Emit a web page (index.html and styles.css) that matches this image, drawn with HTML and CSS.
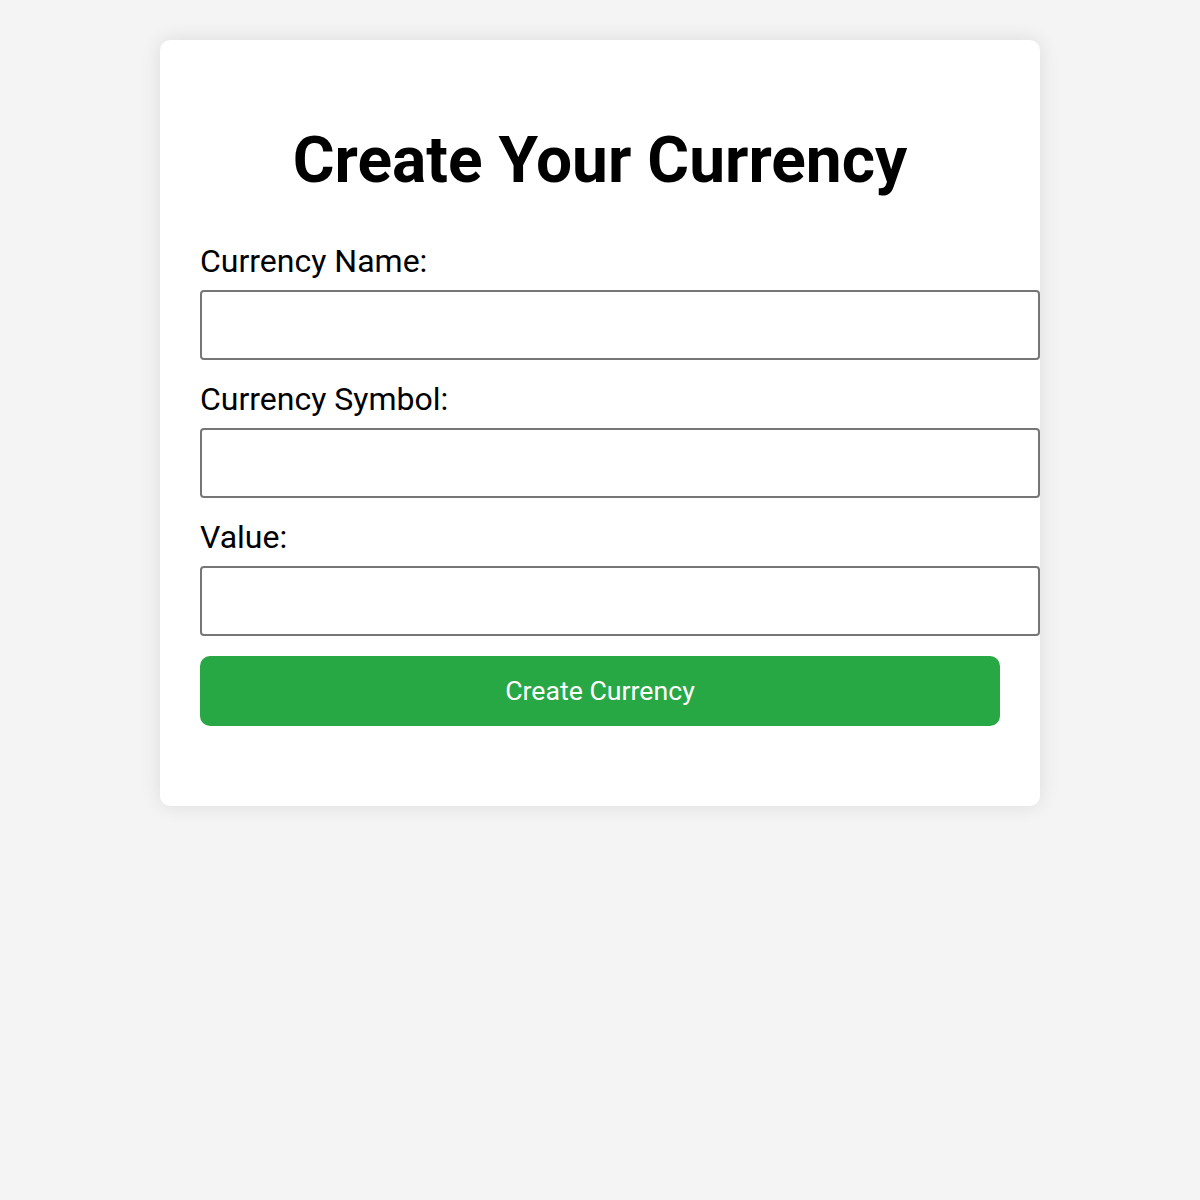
FILE: index.html
```html
<!DOCTYPE html>
<html lang="en">
<head>
  <meta charset="UTF-8">
  <meta name="viewport" content="width=device-width, initial-scale=1.0">
  <title>Create Your Currency</title>
  <link rel="stylesheet" href="styles.css">
</head>
<body>
  <div class="container">
    <h1>Create Your Currency</h1>
    <form id="currencyForm">
      <label for="currencyName">Currency Name:</label>
      <input type="text" id="currencyName">

      <label for="currencySymbol">Currency Symbol:</label>
      <input type="text" id="currencySymbol">

      <label for="currencyValue">Value:</label>
      <input type="text" id="currencyValue">

      <button type="submit">Create Currency</button>
    </form>
  </div>
</body>
</html>
```

FILE: styles.css
```css
body {
  font-family: Roboto, "Liberation Sans", Arial, sans-serif;
  font-size: 32px;
  background-color: #f4f4f4;
  margin: 0;
  padding: 40px 0;
}
.container {
  width: 800px;
  margin: 0 auto;
  padding: 40px;
  background-color: #fff;
  border-radius: 10px;
  box-shadow: 0 0 20px rgba(0,0,0,0.1);
}
h1 {
  text-align: center;
  font-size: 64px;
  margin: 43px 0 44px;
  color: #000;
}
form {
  margin-bottom: 40px;
}
label {
  display: block;
  line-height: 38px;
  margin-bottom: 10px;
  color: #000;
}
input {
  display: block;
  width: 800px;
  height: 30px;
  padding: 18px;
  margin-bottom: 20px;
  border: 2px solid #767676;
  border-radius: 4px;
  font-family: inherit;
  font-size: 24px;
}
button {
  display: block;
  width: 100%;
  height: 70px;
  padding: 0;
  border: none;
  border-radius: 10px;
  background-color: #28a745;
  color: #fff;
  font-family: inherit;
  font-size: 26.67px;
  cursor: pointer;
}
button:hover {
  background-color: #218838;
}
```
